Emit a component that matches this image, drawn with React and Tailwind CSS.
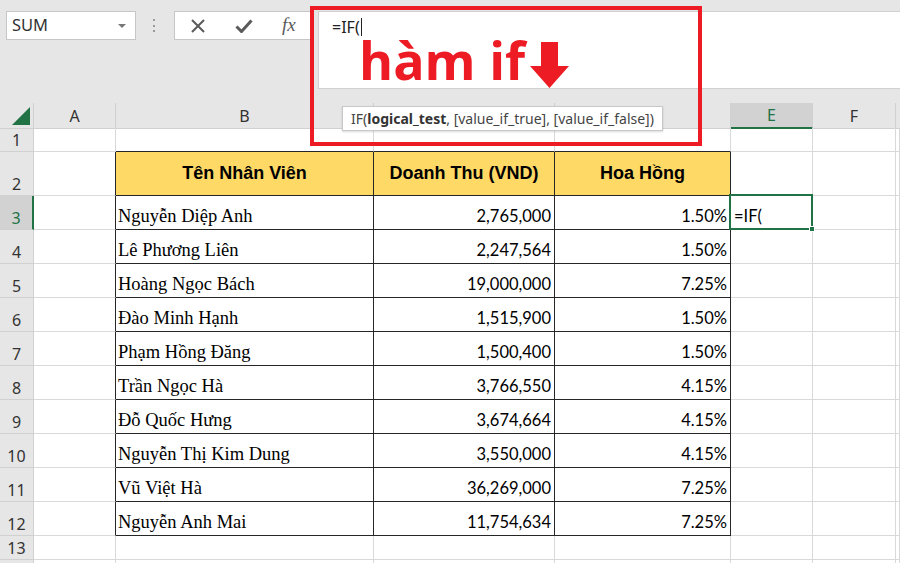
import React from 'react';

const rows = [
  ['Nguyễn Diệp Anh', '2,765,000', '1.50%'],
  ['Lê Phương Liên', '2,247,564', '1.50%'],
  ['Hoàng Ngọc Bách', '19,000,000', '7.25%'],
  ['Đào Minh Hạnh', '1,515,900', '1.50%'],
  ['Phạm Hồng Đăng', '1,500,400', '1.50%'],
  ['Trần Ngọc Hà', '3,766,550', '4.15%'],
  ['Đỗ Quốc Hưng', '3,674,664', '4.15%'],
  ['Nguyễn Thị Kim Dung', '3,550,000', '4.15%'],
  ['Vũ Việt Hà', '36,269,000', '7.25%'],
  ['Nguyễn Anh Mai', '11,754,634', '7.25%'],
];

const cols = 'grid grid-cols-[34px_82px_258px_181px_176px_82px_83px_1fr]';
const hdrFont = "font-['Noto_Sans',sans-serif]";

function RowHead({ n, selected }) {
  return (
    <div
      className={
        selected
          ? `flex items-end justify-center border-b border-r-2 border-b-[#d0d0d0] border-r-[#217346] bg-[#d2d2d2] pb-[3px] text-[16px] leading-none text-[#217346] ${hdrFont}`
          : `flex items-end justify-center border-b border-r border-[#d0d0d0] bg-[#e6e6e6] pb-[3px] text-[16px] leading-none text-[#333] ${hdrFont}`
      }
    >
      {n}
    </div>
  );
}

// plain gridline cell
const Cell = ({ children, className = '' }) => (
  <div className={`border-b border-r border-[#d9d9d9] ${className}`}>{children}</div>
);

function FormulaBar() {
  return (
    <div className="flex h-[103px] bg-[#e6e6e6]">
      {/* name box */}
      <div className="ml-[6px] mt-[11px] flex h-[29px] w-[130px] items-center justify-between border border-[#c6c6c6] bg-white pl-[5px] pr-[9px]">
        <span className={`text-[16.5px] text-[#333] ${hdrFont}`}>SUM</span>
        <svg width="8" height="4" viewBox="0 0 8 4"><path d="M0 0h8L4 4z" fill="#777" /></svg>
      </div>
      <div className="ml-[17px] mt-[19px] flex h-[13px] w-[2px] flex-col justify-between">
        <span className="h-[2px] w-[2px] bg-[#9a9a9a]" />
        <span className="h-[2px] w-[2px] bg-[#9a9a9a]" />
        <span className="h-[2px] w-[2px] bg-[#9a9a9a]" />
      </div>
      {/* cancel / enter / fx */}
      <div className="ml-[19px] mt-[11px] flex h-[29px] w-[139px] items-center border border-[#c6c6c6] bg-white">
        <svg className="ml-[16px]" width="14" height="14" viewBox="0 0 14 14">
          <path d="M1 1L13 13M13 1L1 13" stroke="#5a5a5a" strokeWidth="2" />
        </svg>
        <svg className="ml-[30px]" width="18" height="14" viewBox="0 0 18 14">
          <path d="M1.5 7.5L6.5 12.5L16.5 1.5" stroke="#5a5a5a" strokeWidth="3" fill="none" />
        </svg>
        <span className="ml-[29px] font-['Liberation_Serif',serif] text-[19px] italic text-[#5a5a5a]">fx</span>
      </div>
      {/* formula input */}
      <div className="ml-[5px] mt-[11px] h-[78px] flex-1 border-y border-l border-[#d0d0d0] bg-white pl-[13px] pt-[4px]">
        <div className={`flex items-center text-[16px] leading-[22px] text-[#222] ${hdrFont}`}>
          =IF(
          <span className="ml-[1px] h-[18px] w-px bg-[#222]" />
        </div>
        <div className="ml-[27px] -mt-[6px] flex items-center">
          <span className="font-['Open_Sans',sans-serif] text-[52px] font-bold leading-[56px] text-[#ed1c24]">hàm if</span>
          <svg className="ml-[5px] mt-[9px]" width="39" height="46" viewBox="0 0 39 46">
            <path d="M11 0H28V24H39L19.5 46L0 24H11Z" fill="#ed1c24" />
          </svg>
        </div>
      </div>
    </div>
  );
}

export default function App() {
  const nameCls = "flex items-end border-b border-r border-[#262626] pb-[4px] pl-[2px] font-['Liberation_Serif',serif] text-[18.5px] leading-none text-black";
  const numCls = "flex items-end justify-end border-b border-r border-[#262626] pb-[5px] pr-[3px] font-['Lato',sans-serif] text-[16.5px] leading-none text-black";
  const headCls = "flex items-center justify-center border-b border-r border-[#262626] bg-[#ffd966] font-['Liberation_Sans',sans-serif] text-[18px] font-bold text-black";

  return (
    <div className="relative h-[563px] w-[900px] overflow-hidden bg-white">
      <FormulaBar />

      {/* column headers (C and D sit under the tooltip) */}
      <div className={`${cols} h-[25px] bg-[#e6e6e6] text-[16px] text-[#333] ${hdrFont}`}>
        <div className="relative border-b border-r border-[#d0d0d0]">
          <svg className="absolute bottom-[3px] right-[3px]" width="18" height="18" viewBox="0 0 18 18">
            <path d="M18 0V18H0Z" fill="#217346" />
          </svg>
        </div>
        <div className="flex items-center justify-center border-b border-r border-[#d0d0d0]">A</div>
        <div className="flex items-center justify-center border-b border-r border-[#d0d0d0]">B</div>
        <div className="border-b border-r border-[#d0d0d0]" />
        <div className="border-b border-r border-[#d0d0d0]" />
        <div className="flex items-center justify-center border-b-2 border-r border-b-[#217346] border-r-[#d0d0d0] bg-[#d2d2d2] text-[#217346]">E</div>
        <div className="flex items-center justify-center border-b border-r border-[#d0d0d0]">F</div>
        <div className="border-b border-[#d0d0d0]" />
      </div>

      {/* row 1 */}
      <div className={`${cols} h-[24px]`}>
        <RowHead n={1} />
        <Cell />
        <Cell className="border-b-[#262626]" />
        <Cell className="border-b-[#262626]" />
        <Cell className="border-b-[#262626]" />
        <Cell />
        <Cell />
        <Cell />
      </div>

      {/* row 2 - table header */}
      <div className={`${cols} h-[44px]`}>
        <RowHead n={2} />
        <Cell className="border-r-[#262626]" />
        <div className={headCls}>Tên Nhân Viên</div>
        <div className={headCls}>Doanh Thu (VND)</div>
        <div className={headCls}>Hoa Hồng</div>
        <Cell />
        <Cell />
        <Cell />
      </div>

      {rows.map((r, i) => (
        <div key={i} className={`${cols} h-[34px]`}>
          <RowHead n={i + 3} selected={i === 0} />
          <Cell className="border-r-[#262626]" />
          <div className={nameCls}>{r[0]}</div>
          <div className={numCls}>{r[1]}</div>
          <div className={numCls}>{r[2]}</div>
          {i === 0 ? (
            <div className="relative flex items-end border-b border-r border-[#d9d9d9] pb-[5px] pl-[3px] font-['Lato',sans-serif] text-[16.5px] leading-none text-black">
              =IF(
              <div className="absolute -left-[2px] -top-[2px] h-[36px] w-[84px] border-2 border-[#217346]" />
              <div className="absolute -bottom-[3px] -right-[3px] h-[6px] w-[6px] border border-white bg-[#217346]" />
            </div>
          ) : (
            <Cell />
          )}
          <Cell />
          <Cell />
        </div>
      ))}

      {/* row 13 */}
      <div className={`${cols} h-[24px]`}>
        <RowHead n={13} />
        <Cell />
        <Cell />
        <Cell />
        <Cell />
        <Cell />
        <Cell />
        <Cell />
      </div>
      <div className={`${cols} h-[10px]`}>
        <div className="border-r border-[#d0d0d0] bg-[#e6e6e6]" />
        <Cell />
        <Cell />
        <Cell />
        <Cell />
        <Cell />
        <Cell />
        <Cell />
      </div>

      {/* function tooltip */}
      <div className={`absolute left-[342px] top-[106px] flex h-[25px] items-center border border-[#c8c8c8] bg-white pl-[8px] pr-[8px] text-[14px] text-[#444] shadow-[0_1px_2px_rgba(0,0,0,0.15)] ${hdrFont}`}>
        IF(<b className="font-bold text-[#333]">logical_test</b>, [value_if_true], [value_if_false])
      </div>

      {/* red highlight box */}
      <div className="absolute left-[310px] top-[6px] h-[140px] w-[392px] border-4 border-[#ed1c24]" />
    </div>
  );
}
